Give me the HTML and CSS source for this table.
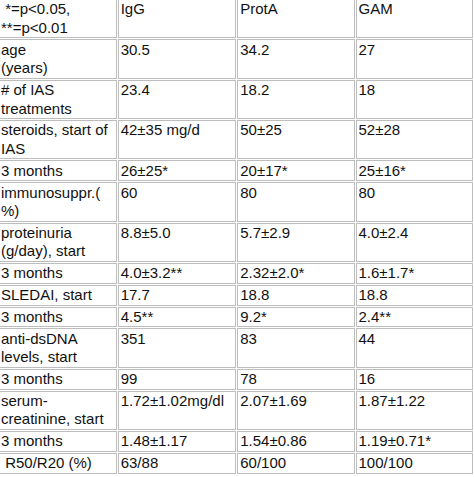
FILE: index.html
```html
<!DOCTYPE html>
<html>
<head>
<meta charset="utf-8">
<link rel="stylesheet" href="styles.css">
</head>
<body>
<div class="frame">
<table class="stats">
<tbody>
<tr><td>&nbsp;*=p&lt;0.05,<br>**=p&lt;0.01</td><td>IgG</td><td>ProtA</td><td>GAM</td></tr>
<tr><td>age<br>(years)</td><td>30.5</td><td>34.2</td><td>27</td></tr>
<tr><td># of IAS<br>treatments</td><td>23.4</td><td>18.2</td><td>18</td></tr>
<tr><td>steroids, start of<br>IAS</td><td>42±35 mg/d</td><td>50±25</td><td>52±28</td></tr>
<tr><td>3 months</td><td>26±25*</td><td>20±17*</td><td>25±16*</td></tr>
<tr><td>immunosuppr.(<br>%)</td><td>60</td><td>80</td><td>80</td></tr>
<tr><td>proteinuria<br>(g/day), start</td><td>8.8±5.0</td><td>5.7±2.9</td><td>4.0±2.4</td></tr>
<tr><td>3 months</td><td>4.0±3.2**</td><td>2.32±2.0*</td><td>1.6±1.7*</td></tr>
<tr><td>SLEDAI, start</td><td>17.7</td><td>18.8</td><td>18.8</td></tr>
<tr><td>3 months</td><td>4.5**</td><td>9.2*</td><td>2.4**</td></tr>
<tr><td>anti-dsDNA<br>levels, start</td><td>351</td><td>83</td><td>44</td></tr>
<tr><td>3 months</td><td>99</td><td>78</td><td>16</td></tr>
<tr><td>serum-<br>creatinine, start</td><td>1.72±1.02mg/dl</td><td>2.07±1.69</td><td>1.87±1.22</td></tr>
<tr><td>3 months</td><td>1.48±1.17</td><td>1.54±0.86</td><td>1.19±0.71*</td></tr>
<tr><td>&nbsp;R50/R20 (%)</td><td>63/88</td><td>60/100</td><td>100/100</td></tr>
</tbody>
</table>
</div>
</body>
</html>
```
FILE: styles.css
```css
html, body {
  margin: 0;
  padding: 0;
  background: #ffffff;
}
.frame {
  width: 474px;
  height: 477px;
  overflow: hidden;
}
.stats {
  margin: -2px 0 0 -3px;
  border-collapse: separate;
  border-spacing: 1px;
  table-layout: fixed;
  font-family: "Liberation Sans", Arial, sans-serif;
  font-size: 15px;
  line-height: 18.5px;
  color: #111111;
}
.stats td {
  width: 115px;
  border: 1px solid #bdbdbd;
  padding: 0.35px 0 0 2px;
  vertical-align: top;
  white-space: nowrap;
  text-align: left;
}
```
